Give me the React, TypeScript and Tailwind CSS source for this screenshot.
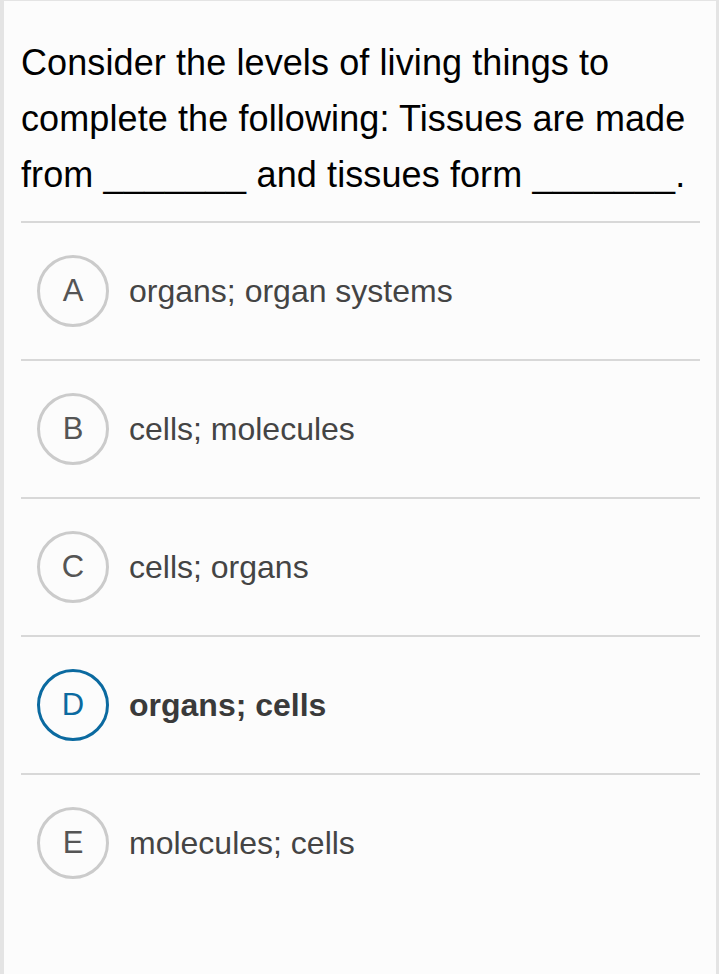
const options = [
  { key: "A", text: "organs; organ systems" },
  { key: "B", text: "cells; molecules" },
  { key: "C", text: "cells; organs" },
  { key: "D", text: "organs; cells", selected: true },
  { key: "E", text: "molecules; cells" },
];

export default function App() {
  return (
    <div
      className="min-h-[974px] bg-[#fcfcfc] border-l-4 border-r-[3px] border-t border-[#e4e4e4]"
      style={{ fontFamily: '"Liberation Sans", Arial, sans-serif' }}
    >
      <div className="pl-[17px] pr-[16px] pt-[34px]">
        <p className="text-[36px] leading-[56px] text-black pb-[18px] border-b-2 border-[#d8d8d8] tracking-[0.1px]">
          Consider the levels of living things to complete the following: Tissues are made from{" "}
          <span className="tracking-[0.4px]">_______</span> and tissues form{" "}
          <span className="tracking-[0.4px]">_______</span>.
        </p>
        {options.map((opt, i) => (
          <div
            key={opt.key}
            className={
              i < options.length - 1
                ? "flex items-center gap-[20px] pl-4 py-8 border-b-2 border-[#d8d8d8]"
                : "flex items-center gap-[20px] pl-4 py-8"
            }
          >
            <div
              className={
                opt.selected
                  ? "w-[72px] h-[72px] rounded-full border-[3px] border-[#0b6aa0] flex items-center justify-center text-[31px] text-[#0b6aa0]"
                  : "w-[72px] h-[72px] rounded-full border-[3px] border-[#cbcbcb] flex items-center justify-center text-[31px] text-[#555555]"
              }
            >
              {opt.key}
            </div>
            <span
              className={
                opt.selected
                  ? "text-[32px] font-bold text-[#3a3a3a]"
                  : "text-[32px] text-[#444444]"
              }
            >
              {opt.text}
            </span>
          </div>
        ))}
      </div>
    </div>
  );
}
